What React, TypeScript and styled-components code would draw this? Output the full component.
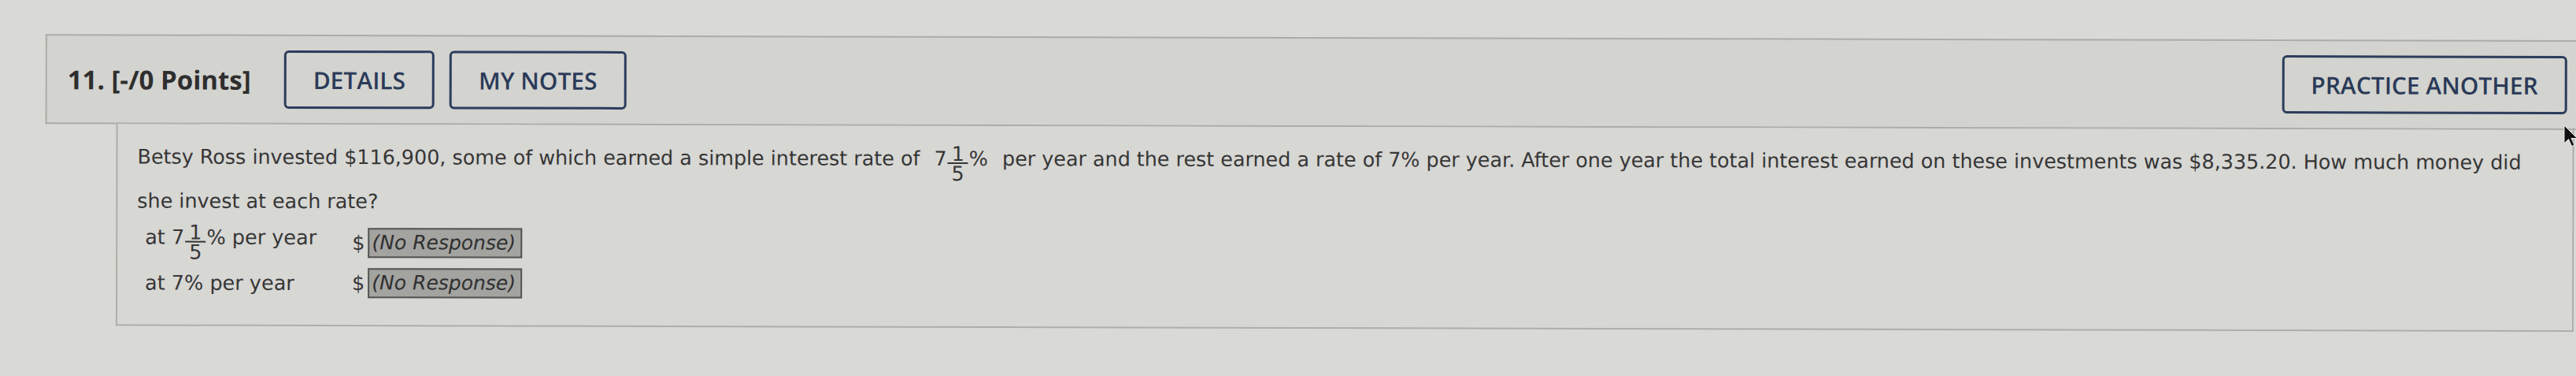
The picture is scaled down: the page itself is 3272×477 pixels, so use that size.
import React from 'react';
import styled, { createGlobalStyle } from 'styled-components';

const GlobalStyle = createGlobalStyle`
  html, body {
    margin: 0;
    padding: 0;
    background: #d9d9d5;
    overflow: hidden;
  }
  body {
    width: 3272px;
    height: 477px;
    position: relative;
    font-family: "DejaVu Sans", Verdana, sans-serif;
    color: #363636;
  }
`;

const Page = styled.div`
  padding: 43px 0 0 58px;
  transform: rotate(0.14deg);
  transform-origin: 0 0;
`;

const Header = styled.div`
  display: flex;
  align-items: center;
  box-sizing: border-box;
  height: 114px;
  background: #d3d3cf;
  border: 2px solid #acaca8;
  border-right: none;
  padding: 0 11px 0 26px;
`;

const Points = styled.div`
  font-family: "Open Sans", "Liberation Sans", sans-serif;
  font-weight: 700;
  font-size: 33px;
  color: #2e2e2e;
  margin-right: 42px;
  white-space: nowrap;
`;

const Actions = styled.div<{ $right?: boolean }>`
  display: flex;
  gap: 19px;
  margin-left: ${p => (p.$right ? 'auto' : '0')};
`;

const ActionButton = styled.button`
  box-sizing: border-box;
  height: 74px;
  padding: 0 34px;
  background: transparent;
  border: 3px solid #2c3d5c;
  border-radius: 6px;
  font-family: "Open Sans", "Liberation Sans", sans-serif;
  font-weight: 600;
  font-size: 30px;
  color: #2a3a58;
  white-space: nowrap;
`;

const QuestionBox = styled.div`
  box-sizing: border-box;
  margin-left: 90px;
  width: 3122px;
  height: 256px;
  background: #d7d7d4;
  border: 2px solid #aeaeaa;
  border-top: none;
  padding: 14px 0 0 25px;
`;

const Prompt = styled.p`
  margin: 0;
  max-width: 3070px;
  font-size: 25.4px;
  line-height: 54px;
  color: #363636;
`;

const MathSpan = styled.span<{ $spaced?: boolean }>`
  margin: ${p => (p.$spaced ? '0 10px' : '0')};
  white-space: nowrap;
`;

const Fraction = styled.span`
  display: inline-flex;
  flex-direction: column;
  align-items: center;
  vertical-align: 6px;
  margin: 0 1px;
`;

const FracPart = styled.span`
  display: block;
  line-height: 20px;
  padding: 0 5px;
`;

const FracBar = styled.span`
  display: block;
  align-self: stretch;
  height: 2px;
  background: #363636;
  margin: 1px 0 2px;
`;

const Answers = styled.div`
  margin-left: 10px;
  display: flex;
  flex-direction: column;
`;

const AnswerRow = styled.div`
  display: flex;
  align-items: center;
  height: 51.5px;
  font-size: 25.5px;
`;

const RowLabel = styled.div`
  width: 263px;
  white-space: nowrap;
`;

const Dollar = styled.span`
  margin-right: 4px;
`;

const Response = styled.div`
  box-sizing: border-box;
  width: 196px;
  height: 38px;
  background: #a3a3a0;
  border: 2px solid #555553;
  padding-left: 3px;
  font-style: italic;
  font-size: 25px;
  line-height: 34px;
  color: #2f2f2f;
  white-space: nowrap;
  overflow: hidden;
`;

const Cursor = styled.svg`
  position: absolute;
  left: 3255px;
  top: 158px;
`;

const MixedRate: React.FC = () => (
  <>
    7
    <Fraction>
      <FracPart>1</FracPart>
      <FracBar />
      <FracPart>5</FracPart>
    </Fraction>
    %
  </>
);

const App: React.FC = () => {
  const rows = [
    { id: 'a', label: <>at <MixedRate /> per year</> },
    { id: 'b', label: <>at 7% per year</> },
  ];

  return (
    <>
      <GlobalStyle />
      <Page>
        <Header>
          <Points>11. [-/0 Points]</Points>
          <Actions>
            <ActionButton>DETAILS</ActionButton>
            <ActionButton>MY NOTES</ActionButton>
          </Actions>
          <Actions $right>
            <ActionButton>PRACTICE ANOTHER</ActionButton>
          </Actions>
        </Header>
        <QuestionBox>
          <Prompt>
            Betsy Ross invested $116,900, some of which earned a simple interest rate of{' '}
            <MathSpan $spaced>
              <MixedRate />
            </MathSpan>{' '}
            per year and the rest earned a rate of 7% per year. After one year the total interest
            earned on these investments was $8,335.20. How much money did she invest at each rate?
          </Prompt>
          <Answers>
            {rows.map(row => (
              <AnswerRow key={row.id}>
                <RowLabel>{row.label}</RowLabel>
                <Dollar>$</Dollar>
                <Response>(No Response)</Response>
              </AnswerRow>
            ))}
          </Answers>
        </QuestionBox>
      </Page>
      <Cursor width="20" height="30" viewBox="0 0 20 30">
        <path d="M2 1 L2 24 L7.5 18.5 L11.5 27.5 L15 26 L11 17.5 L18.5 17.5 Z" fill="#111" stroke="#eee" strokeWidth="1" />
      </Cursor>
    </>
  );
};

export default App;
